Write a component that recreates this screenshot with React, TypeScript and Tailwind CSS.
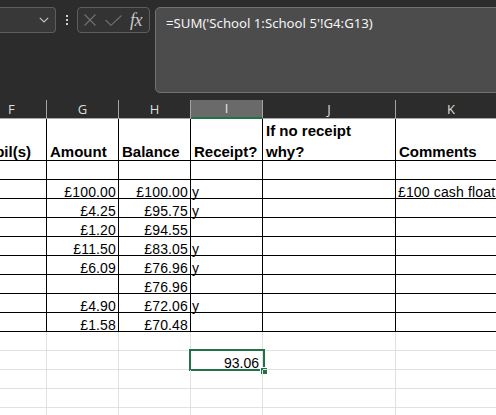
import React from "react";

const W = [47, 72, 72, 72, 133, 110];

type Cell = { text?: string; align?: "l" | "r"; bold?: boolean };

const dataRows: Cell[][] = [
  [{}, {}, {}, {}, {}, {}],
  [{}, { text: "£100.00", align: "r" }, { text: "£100.00", align: "r" }, { text: "y" }, {}, { text: "£100 cash float" }],
  [{}, { text: "£4.25", align: "r" }, { text: "£95.75", align: "r" }, { text: "y" }, {}, {}],
  [{}, { text: "£1.20", align: "r" }, { text: "£94.55", align: "r" }, {}, {}, {}],
  [{}, { text: "£11.50", align: "r" }, { text: "£83.05", align: "r" }, { text: "y" }, {}, {}],
  [{}, { text: "£6.09", align: "r" }, { text: "£76.96", align: "r" }, { text: "y" }, {}, {}],
  [{}, {}, { text: "£76.96", align: "r" }, {}, {}, {}],
  [{}, { text: "£4.90", align: "r" }, { text: "£72.06", align: "r" }, { text: "y" }, {}, {}],
  [{}, { text: "£1.58", align: "r" }, { text: "£70.48", align: "r" }, {}, {}, {}],
];

function TopBar() {
  return (
    <div className="h-[100px] bg-[#2c2c2c] relative flex items-start pt-[7px] overflow-hidden">
      {/* name box */}
      <div className="w-[56px] h-[26px] shrink-0 box-border border-y border-r border-[#5e5e5e] rounded-r-[4px] bg-[#383838] flex items-center justify-end pr-[6px]">
        <svg width="10" height="6" viewBox="0 0 10 6">
          <path d="M0.8 0.8 L5 5 L9.2 0.8" fill="none" stroke="#c4c4c4" strokeWidth="1.2" />
        </svg>
      </div>
      {/* dots */}
      <div className="w-[21px] h-[26px] shrink-0 flex flex-col items-center justify-center gap-[2px]">
        <div className="w-[2px] h-[2px] bg-[#d0d0d0]" />
        <div className="w-[2px] h-[2px] bg-[#d0d0d0]" />
        <div className="w-[2px] h-[2px] bg-[#d0d0d0]" />
      </div>
      {/* fx box */}
      <div className="w-[73px] h-[26px] shrink-0 box-border border border-[#5e5e5e] rounded-[4px] bg-[#333333] flex items-center pl-[6px]">
        <svg width="12" height="12" viewBox="0 0 12 12">
          <path d="M0.5 0.5 L11.5 11.5 M11.5 0.5 L0.5 11.5" stroke="#727272" strokeWidth="1.1" fill="none" />
        </svg>
        <svg width="17" height="11" viewBox="0 0 17 11" className="ml-[9px]">
          <path d="M0.5 5 L6 10.3 L16.5 0.5" stroke="#727272" strokeWidth="1.1" fill="none" />
        </svg>
        <span className="ml-[8px] text-[18px] leading-none italic text-[#c8c8c8] font-['Liberation_Serif',serif] tracking-[-0.5px]">
          fx
        </span>
      </div>
      {/* formula box */}
      <div className="ml-[5px] w-[360px] h-[86px] shrink-0 box-border border border-[#727272] rounded-[5px] bg-[#4c4c4c] pl-[10px] pt-[3px]">
        <span className="text-[13.2px] leading-[18px] text-[#f4f4f4] font-['Noto_Sans',sans-serif] whitespace-nowrap">
          =SUM('School 1:School 5'!G4:G13)
        </span>
      </div>
    </div>
  );
}

function ColHeaders() {
  const letters = ["F", "G", "H", "I", "J", "K"];
  return (
    <div className="flex h-[19px] bg-[#2c2c2c]">
      {letters.map((l, i) => {
        const sel = l === "I";
        return (
          <div
            key={l}
            style={{ width: W[i] }}
            className={
              "shrink-0 box-border h-[19px] flex items-center text-[13px] font-['Open_Sans',sans-serif] " +
              (i < 5 ? "border-r border-[#a3a3a3] " : "") +
              (sel
                ? "bg-[#6a6a6a] border-b-2 border-b-[#1f7346] text-[#e8e8e8] "
                : "border-b border-b-[#a8a8a8] text-[#dedede] ") +
              (i === 0 ? "justify-start pl-[8px]" : "justify-center")
            }
          >
            <span className="leading-none">{l}</span>
          </div>
        );
      })}
    </div>
  );
}

function HeaderRow() {
  const cells = ["Pupil(s)", "Amount", "Balance", "Receipt?", "", "Comments"];
  return (
    <div className="flex h-[42px]">
      {cells.map((c, i) => (
        <div
          key={i}
          style={{ width: W[i] }}
          className={
            "shrink-0 box-border h-[42px] border-b border-black flex items-end overflow-hidden text-[15px] font-bold text-black leading-[21px] " +
            (i < 5 ? "border-r " : "") +
            (i === 0 ? "justify-end pr-[15px]" : "pl-[3px]")
          }
        >
          {i === 4 ? (
            <span className="translate-y-[2px]">
              If no receipt
              <br />
              why?
            </span>
          ) : (
            <span className="whitespace-nowrap translate-y-[2px]">{c}</span>
          )}
        </div>
      ))}
    </div>
  );
}

function DataRow({ cells }: { cells: Cell[] }) {
  return (
    <div className="flex h-[19px]">
      {cells.map((c, i) => (
        <div
          key={i}
          style={{ width: W[i] }}
          className={
            "shrink-0 box-border h-[19px] border-b border-black flex items-end overflow-visible text-[14px] text-black leading-[11px] whitespace-nowrap " +
            (i < 5 ? "border-r " : "") +
            (c.align === "r" ? "justify-end pr-[2px]" : i === 5 ? "pl-[2px]" : "pl-[1px]")
          }
        >
          {c.text && <span className="tracking-[0.15px]">{c.text}</span>}
        </div>
      ))}
    </div>
  );
}

function GrayRow({ selected }: { selected?: boolean }) {
  return (
    <div className="flex h-[19px]">
      {W.map((w, i) => (
        <div
          key={i}
          style={{ width: w }}
          className={
            "shrink-0 box-border h-[19px] border-b border-[#e1e1e1] relative flex items-end justify-end pr-[3px] text-[14px] leading-[11px] text-black " +
            (i < 5 ? "border-r " : "")
          }
        >
          {selected && i === 3 && (
            <>
              <span>93.06</span>
              <div className="absolute left-[-2px] top-[-2px] w-[76px] h-[22px] box-border border-2 border-[#1f7346]" />
              <div className="absolute left-[69px] top-[16px] w-[6px] h-[6px] bg-[#1f7346] border border-white box-content" />
            </>
          )}
        </div>
      ))}
    </div>
  );
}

export default function App() {
  return (
    <div className="w-[496px] h-[415px] overflow-hidden bg-white font-['Liberation_Sans',Arial,sans-serif]">
      <TopBar />
      <ColHeaders />
      <div className="overflow-hidden">
        <HeaderRow />
        {dataRows.map((r, i) => (
          <DataRow key={i} cells={r} />
        ))}
        <GrayRow />
        <GrayRow selected />
        <GrayRow />
        <GrayRow />
        <GrayRow />
      </div>
    </div>
  );
}
